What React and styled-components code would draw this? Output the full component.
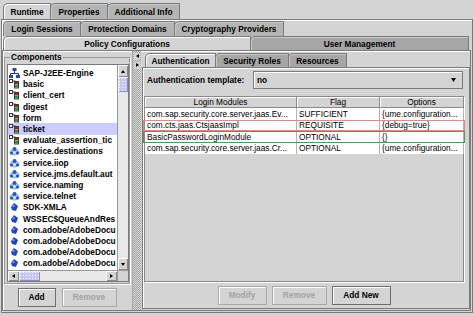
import React from 'react'
import styled, { createGlobalStyle } from 'styled-components'

const GlobalStyle = createGlobalStyle`
  html, body {
    margin: 0;
    padding: 0;
    background: #d4d4d4;
  }
  body {
    font-family: "Liberation Sans", Arial, sans-serif;
  }
`

const Screen = styled.div`
  width: 474px;
  height: 315px;
  box-sizing: border-box;
  overflow: hidden;
  background: #d4d4d4;
  color: #000;
  font-size: 8.3px;
  padding-top: 3px;
  display: flex;
  flex-direction: column;
`

const TabRow = styled.div`
  display: flex;
  flex: none;
  height: ${p => p.$h}px;
  padding-left: ${p => p.$indent || 0}px;
`

const Tab = styled.div`
  box-sizing: border-box;
  width: ${p => p.$w}px;
  height: 100%;
  display: flex;
  align-items: center;
  justify-content: center;
  font-weight: bold;
  white-space: nowrap;
  background: ${p => (p.$active ? '#d4d4d4' : p.$dark ? '#a6a6a6' : '#b4b4b4')};
  border: 1px solid #7a7a7a;
  border-bottom: none;
  border-top-left-radius: 5px;
  margin-right: -1px;
  box-shadow: inset 1px 1px 0 ${p => (p.$active ? '#ffffff' : '#c8c8c8')};
`

const OuterPane = styled.div`
  flex: 1;
  min-height: 0;
  margin: 0 1px 2px 1px;
  border: 1px solid #7a7a7a;
  box-shadow: inset 1px 1px 0 #fff;
  padding: 1px 0 1px 0;
  display: flex;
  flex-direction: column;
`

const InnerPane = styled.div`
  flex: 1;
  min-height: 0;
  border: 1px solid #7a7a7a;
  box-shadow: inset 1px 1px 0 #fff;
  margin: 0 1px 0 0;
  display: flex;
`

/* ---------- left side ---------- */

const LeftPanel = styled.div`
  width: 126px;
  flex: none;
  display: flex;
  flex-direction: column;
  padding-left: 1px;
`

const GroupBox = styled.fieldset`
  flex: 1;
  min-height: 0;
  margin: 1px 0 0 0;
  padding: 2px 0 1px 2px;
  border: 1px solid #9a9a9a;
  box-shadow: 1px 1px 0 #fff;
  display: flex;
  flex-direction: column;
`

const Legend = styled.legend`
  font-weight: bold;
  padding: 0 1px;
  margin-left: 3px;
  line-height: 10px;
`

const ListBox = styled.div`
  flex: 1;
  min-height: 0;
  border: 1px solid #7a7a7a;
  background: #fff;
  display: grid;
  grid-template-columns: 1fr 11px;
  grid-template-rows: 1fr 11px;
`

const Viewport = styled.div`
  overflow: hidden;
  padding-top: 2.5px;
`

const Item = styled.div`
  height: 11.2px;
  display: flex;
  align-items: center;
  gap: 3px;
  padding-left: 1px;
  font-weight: bold;
  white-space: nowrap;
  overflow: hidden;
  background: ${p => (p.$selected ? '#ccccff' : 'transparent')};

  svg {
    flex: none;
  }
`

const VScroll = styled.div`
  display: flex;
  flex-direction: column;
  background: #e8e8e8;
  border-left: 1px solid #9a9a9a;
`

const HScroll = styled.div`
  display: flex;
  background: #e8e8e8;
  border-top: 1px solid #9a9a9a;
`

const Corner = styled.div`
  background: #d4d4d4;
  border-top: 1px solid #9a9a9a;
  border-left: 1px solid #9a9a9a;
`

const ArrowBtn = styled.div`
  flex: none;
  width: ${p => (p.$horizontal ? '11px' : 'auto')};
  height: ${p => (p.$horizontal ? 'auto' : '12px')};
  background: #d4d4d4;
  box-shadow: inset 1px 1px 0 #fff, inset -1px -1px 0 #8a8a8a;
  display: flex;
  align-items: center;
  justify-content: center;
`

const Thumb = styled.div`
  flex: none;
  ${p => (p.$horizontal ? 'width: 21px;' : 'height: 15px;')}
  background-color: #c6c6f4;
  background-image: radial-gradient(circle, #ffffff 0.5px, transparent 0.7px);
  background-size: 3px 3px;
  box-shadow: inset 1px 1px 0 #eeeeff, inset -1px -1px 0 #8c8cbc;
`

const Track = styled.div`
  flex: 1;
`

const ButtonBar = styled.div`
  flex: none;
  height: 26px;
  display: flex;
  align-items: center;
  justify-content: center;
  gap: ${p => p.$gap || 6}px;
`

const Button = styled.div`
  box-sizing: border-box;
  width: ${p => p.$w}px;
  height: 19px;
  display: flex;
  align-items: center;
  justify-content: center;
  font-weight: bold;
  color: ${p => (p.$disabled ? '#a2a2a2' : '#000')};
  border: 1px solid ${p => (p.$disabled ? '#a8a8a8' : '#6e6e6e')};
  box-shadow: inset 1px 1px 0 #fff;
  background: #d4d4d4;
`

/* ---------- splitter ---------- */

const Divider = styled.div`
  width: 8px;
  flex: none;
  margin: 0 1px 0 2px;
  border-left: 1px solid #a8a8a8;
  display: flex;
  flex-direction: column;
  align-items: center;
  padding-top: 2px;
  gap: 2px;
  background: repeating-conic-gradient(#a4a4a4 0 25%, #d8d8d8 0 50%) 0 0 / 2px 2px;
`

const Arrow = styled.div`
  width: 6px;
  height: 7px;
  display: flex;
  align-items: center;
  justify-content: center;
  background: #d4d4d4;
`

/* ---------- right side ---------- */

const RightPanel = styled.div`
  flex: 1;
  min-width: 0;
  display: flex;
  flex-direction: column;
  padding: 2px 0 1px 0;
`

const TabBody = styled.div`
  flex: 1;
  min-height: 0;
  border: 1px solid #7a7a7a;
  box-shadow: inset 1px 1px 0 #fff;
  display: flex;
  flex-direction: column;
  padding: 3px 5px 0 1px;
`

const FormRow = styled.div`
  height: 18px;
  flex: none;
  display: flex;
  align-items: center;
  padding-left: 3px;
  margin-right: 1px;
`

const Label = styled.span`
  font-weight: bold;
  width: 106px;
  flex: none;
`

const Combo = styled.div`
  flex: 1;
  height: 18px;
  box-sizing: border-box;
  border: 1px solid #7a7a7a;
  box-shadow: inset 1px 1px 0 #fff;
  display: flex;
  align-items: center;
  justify-content: space-between;
  padding: 0 5px 0 3px;
  font-weight: bold;
`

const Table = styled.div`
  flex: 1;
  min-height: 0;
  margin-top: 7px;
  border: 1px solid #8a8a8a;
  box-shadow: 1px 1px 0 #fff;
  display: flex;
  flex-direction: column;
`

const Grid = styled.div`
  display: grid;
  grid-template-columns: 152px 83px 84px;
  position: relative;
  height: ${p => p.$h}px;
  background: ${p => (p.$header ? '#d4d4d4' : '#fff')};

  &::after {
    content: '';
    display: ${p => (p.$mark ? 'block' : 'none')};
    position: absolute;
    top: 0;
    bottom: 0;
    left: -2px;
    right: -2px;
    border: 1px solid ${p => p.$mark};
    pointer-events: none;
  }
`

const HeadCell = styled.div`
  box-sizing: border-box;
  display: flex;
  align-items: center;
  justify-content: center;
  border-right: 1px solid #8a8a8a;
  border-bottom: 1px solid #8a8a8a;
  box-shadow: inset 1px 1px 0 #fff;
`

const Cell = styled.div`
  box-sizing: border-box;
  display: flex;
  align-items: center;
  padding-left: 2px;
  white-space: nowrap;
  overflow: hidden;
  border-right: 1px solid #b4b4b4;
`

/* ---------- icons ---------- */

const TreeIcon = () => (
  <svg width="11" height="10" viewBox="0 0 11 10">
    <rect x="3.5" y="0" width="4" height="3" fill="#2c48b0" />
    <path d="M5.5 3v2.5M1.5 5.5h8M1.5 5.5v1.5M9.5 5.5v1.5" stroke="#1c2c80" fill="none" />
    <rect x="0" y="7" width="4" height="3" fill="#2c48b0" />
    <rect x="7" y="7" width="4" height="3" fill="#2c48b0" />
  </svg>
)

const KeyIcon = () => (
  <svg width="11" height="10" viewBox="0 0 11 10">
    <rect x="0.5" y="0.5" width="3" height="3" fill="#fff" stroke="#3a3a3a" />
    <path d="M3.5 2h3" stroke="#3a3a3a" />
    <rect x="5.5" y="2.5" width="4" height="6.5" fill="#fff" stroke="#3a3a3a" />
    <rect x="6" y="3" width="3" height="2.5" fill="#8a2a2a" />
    <rect x="6" y="6" width="3" height="2.5" fill="#2f8f3a" />
  </svg>
)

const ServiceIcon = () => (
  <svg width="11" height="10" viewBox="0 0 11 10">
    <ellipse cx="5.5" cy="6" rx="5" ry="3.5" fill="#9cc0ee" />
    <circle cx="5.5" cy="3" r="2" fill="#2a56b8" />
    <circle cx="2.5" cy="7" r="1.6" fill="#2a56b8" />
    <circle cx="8.5" cy="7" r="1.6" fill="#2a56b8" />
    <circle cx="5.5" cy="6.5" r="1" fill="#fff" />
  </svg>
)

const BallIcon = () => (
  <svg width="11" height="10" viewBox="0 0 11 10">
    <path d="M2 5 L5 1 L9 4 L7 9 L3 8 Z" fill="#1f44c4" />
    <circle cx="4.5" cy="4" r="1.3" fill="#6d8cf0" />
  </svg>
)

const Tri = ({ dir, size = 5 }) => {
  const h = size
  const pts = {
    up: `0,${h - 1} ${h - 1},${h - 1} ${(h - 1) / 2},1`,
    down: `0,1 ${h - 1},1 ${(h - 1) / 2},${h - 1}`,
    left: `${h - 1},0 ${h - 1},${h - 1} 1,${(h - 1) / 2}`,
    right: `1,0 1,${h - 1} ${h - 1},${(h - 1) / 2}`
  }[dir]
  return (
    <svg width={h} height={h} viewBox={`0 0 ${h} ${h}`}>
      <polygon points={pts} fill="#000" />
    </svg>
  )
}

/* ---------- data ---------- */

const components = [
  { name: 'SAP-J2EE-Engine', icon: TreeIcon },
  { name: 'basic', icon: KeyIcon },
  { name: 'client_cert', icon: KeyIcon },
  { name: 'digest', icon: KeyIcon },
  { name: 'form', icon: KeyIcon },
  { name: 'ticket', icon: KeyIcon, selected: true },
  { name: 'evaluate_assertion_tic', icon: KeyIcon },
  { name: 'service.destinations', icon: ServiceIcon },
  { name: 'service.iiop', icon: ServiceIcon },
  { name: 'service.jms.default.aut', icon: ServiceIcon },
  { name: 'service.naming', icon: ServiceIcon },
  { name: 'service.telnet', icon: ServiceIcon },
  { name: 'SDK-XMLA', icon: BallIcon },
  { name: 'WSSEC$QueueAndRes', icon: BallIcon },
  { name: 'com.adobe/AdobeDocu', icon: BallIcon },
  { name: 'com.adobe/AdobeDocu', icon: BallIcon },
  { name: 'com.adobe/AdobeDocu', icon: BallIcon },
  { name: 'com.adobe/AdobeDocu', icon: BallIcon }
]

const modules = [
  ['com.sap.security.core.server.jaas.Ev...', 'SUFFICIENT', '{ume.configuration...'],
  ['com.cts.jaas.CtsjaasImpl', 'REQUISITE', '{debug=true}', '#d88c8c'],
  ['BasicPasswordLoginModule', 'OPTIONAL', '{}', '#4f9a55'],
  ['com.sap.security.core.server.jaas.Cr...', 'OPTIONAL', '{ume.configuration...']
]

const App = () => {
  return (
    <Screen>
      <GlobalStyle />
      <TabRow $h={16} $indent={3}>
        <Tab $w={48} $active>Runtime</Tab>
        <Tab $w={58}>Properties</Tab>
        <Tab $w={73}>Additional Info</Tab>
      </TabRow>
      <OuterPane>
        <TabRow $h={15} $indent={1}>
          <Tab $w={78}>Login Sessions</Tab>
          <Tab $w={95}>Protection Domains</Tab>
          <Tab $w={110}>Cryptography Providers</Tab>
        </TabRow>
        <TabRow $h={14} $indent={1}>
          <Tab $w={248} $active>Policy Configurations</Tab>
          <Tab $w={219} $dark>User Management</Tab>
        </TabRow>
        <InnerPane>
          <LeftPanel>
            <GroupBox>
              <Legend>Components</Legend>
              <ListBox>
                <Viewport>
                  {components.map((c, i) => {
                    const Icon = c.icon
                    return (
                      <Item key={i} $selected={c.selected}>
                        <Icon />
                        {c.name}
                      </Item>
                    )
                  })}
                </Viewport>
                <VScroll>
                  <ArrowBtn><Tri dir="up" /></ArrowBtn>
                  <Thumb />
                  <Track />
                  <ArrowBtn><Tri dir="down" /></ArrowBtn>
                </VScroll>
                <HScroll>
                  <ArrowBtn $horizontal><Tri dir="left" /></ArrowBtn>
                  <Thumb $horizontal />
                  <Track />
                  <ArrowBtn $horizontal><Tri dir="right" /></ArrowBtn>
                </HScroll>
                <Corner />
              </ListBox>
            </GroupBox>
            <ButtonBar $gap={6}>
              <Button $w={38}>Add</Button>
              <Button $w={55} $disabled>Remove</Button>
            </ButtonBar>
          </LeftPanel>

          <Divider>
            <Arrow><Tri dir="left" size={5} /></Arrow>
            <Arrow><Tri dir="right" size={5} /></Arrow>
          </Divider>

          <RightPanel>
            <TabRow $h={14} $indent={3}>
              <Tab $w={71} $active>Authentication</Tab>
              <Tab $w={74} $dark>Security Roles</Tab>
              <Tab $w={59} $dark>Resources</Tab>
            </TabRow>
            <TabBody>
              <FormRow>
                <Label>Authentication template:</Label>
                <Combo>
                  <span>no</span>
                  <Tri dir="down" size={6} />
                </Combo>
              </FormRow>
              <Table>
                <Grid $header $h={11}>
                  <HeadCell>Login Modules</HeadCell>
                  <HeadCell>Flag</HeadCell>
                  <HeadCell>Options</HeadCell>
                </Grid>
                {modules.map((m, i) => (
                  <Grid key={i} $h={11.5} $mark={m[3]}>
                    <Cell>{m[0]}</Cell>
                    <Cell>{m[1]}</Cell>
                    <Cell>{m[2]}</Cell>
                  </Grid>
                ))}
              </Table>
              <ButtonBar $gap={5}>
                <Button $w={49} $disabled>Modify</Button>
                <Button $w={55} $disabled>Remove</Button>
                <Button $w={59}>Add New</Button>
              </ButtonBar>
            </TabBody>
          </RightPanel>
        </InnerPane>
      </OuterPane>
    </Screen>
  )
}

export default App
